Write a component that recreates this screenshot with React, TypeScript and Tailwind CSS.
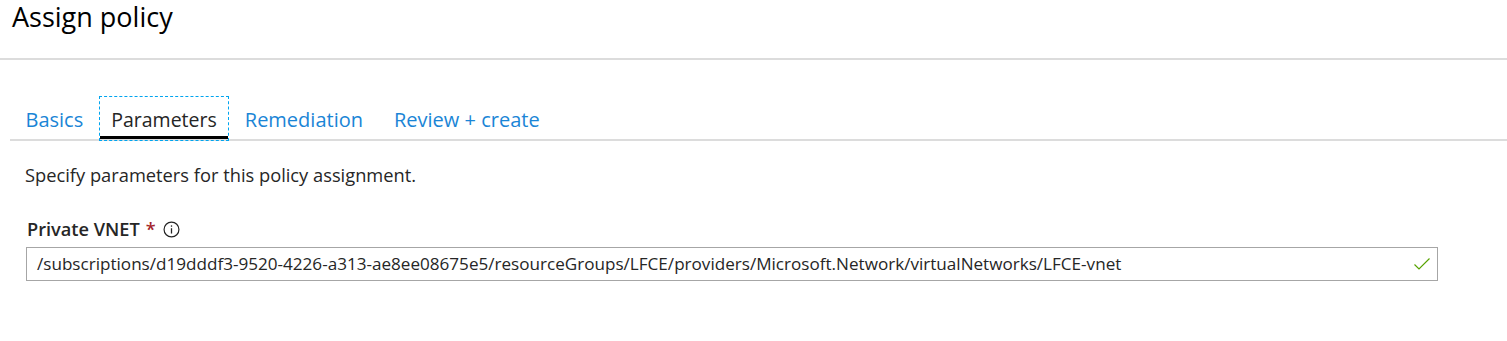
const font = { fontFamily: '"Open Sans", "Noto Sans", sans-serif' };

const tabs = ['Basics', 'Parameters', 'Remediation', 'Review + create'];

export default function App() {
  const active = 'Parameters';
  const path =
    '/subscriptions/d19dddf3-9520-4226-a313-ae8ee08675e5/resourceGroups/LFCE/providers/Microsoft.Network/virtualNetworks/LFCE-vnet';

  return (
    <div className="w-[1507px] h-[341px] bg-white text-[#1b1b1b] overflow-hidden" style={font}>
      {/* Header */}
      <div className="h-[60px] border-b-2 border-[#dcdcdc] pl-3">
        <h1 className="text-[27px] leading-[34px] text-black">Assign policy</h1>
      </div>

      {/* Tabs */}
      <div className="ml-[10px] mt-[34px] flex items-end border-b-2 border-[#dcdcdc]">
        {tabs.map((t) =>
          t === active ? (
            <div
              key={t}
              className="h-[45px] px-[11.5px] flex flex-col justify-end border border-dashed border-[#00a4ef] -mb-[2px]"
            >
              <span className="text-[19.5px] leading-[30px] text-[#252525] pb-[1px]">{t}</span>
              <span className="block h-[3px] bg-black -mx-[11.5px] mb-[1px]" />
            </div>
          ) : (
            <div key={t} className="h-[45px] px-[15.5px] flex items-end pb-[4px]">
              <span className="text-[20px] leading-[30px] text-[#1a85d6]">{t}</span>
            </div>
          )
        )}
      </div>

      {/* Body */}
      <div className="pl-[25px] pr-[69px]">
        <p className="mt-[22px] text-[18.3px] leading-[24px] text-[#262626]">
          Specify parameters for this policy assignment.
        </p>

        <div className="mt-[30px] flex items-center gap-[6px]">
          <span className="text-[18.2px] font-semibold leading-[24px] text-[#262626] ml-[2px]">
            Private VNET
          </span>
          <span className="text-[18px] font-semibold leading-[24px] text-[#a4262c]">*</span>
          <svg width="17" height="17" viewBox="0 0 16 16" className="ml-[1px]">
            <circle cx="8" cy="8" r="7" fill="none" stroke="#222" strokeWidth="1.1" />
            <rect x="7.4" y="6.8" width="1.2" height="5" fill="#222" />
            <rect x="7.4" y="4.1" width="1.2" height="1.3" fill="#222" />
          </svg>
        </div>

        <div className="mt-[6px] ml-[1px] h-[34px] border border-[#a6a6a6] flex items-center pl-[10px] pr-[6px]">
          <span className="flex-1 text-[17.1px] text-[#262626] whitespace-nowrap">{path}</span>
          <svg width="18" height="14" viewBox="0 0 18 14">
            <path d="M1.5 7.5 L6 12 L16.5 1.5" fill="none" stroke="#57a300" strokeWidth="1.2" />
          </svg>
        </div>
      </div>
    </div>
  );
}
